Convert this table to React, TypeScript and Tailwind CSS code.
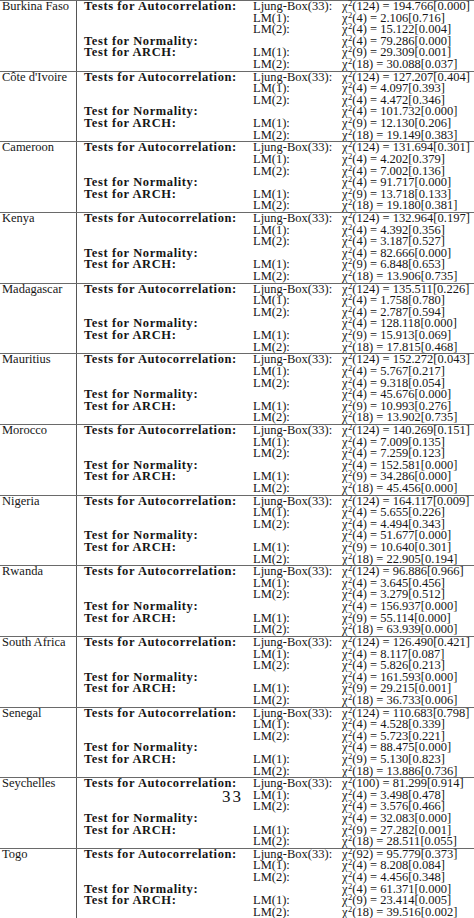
import React from "react";

type Stat = { df: string; v: string; p: string };

interface CountryRow {
  name: string;
  lb: Stat;
  lm1: Stat;
  lm2: Stat;
  norm: Stat;
  arch1: Stat;
  arch2: Stat;
}

const s = (df: string, v: string, p: string): Stat => ({ df, v, p });

const rows: CountryRow[] = [
  { name: "Burkina Faso", lb: s("124", "194.766", "0.000"), lm1: s("4", "2.106", "0.716"), lm2: s("4", "15.122", "0.004"), norm: s("4", "79.286", "0.000"), arch1: s("9", "29.309", "0.001"), arch2: s("18", "30.088", "0.037") },
  { name: "Côte d'Ivoire", lb: s("124", "127.207", "0.404"), lm1: s("4", "4.097", "0.393"), lm2: s("4", "4.472", "0.346"), norm: s("4", "101.732", "0.000"), arch1: s("9", "12.130", "0.206"), arch2: s("18", "19.149", "0.383") },
  { name: "Cameroon", lb: s("124", "131.694", "0.301"), lm1: s("4", "4.202", "0.379"), lm2: s("4", "7.002", "0.136"), norm: s("4", "91.717", "0.000"), arch1: s("9", "13.718", "0.133"), arch2: s("18", "19.180", "0.381") },
  { name: "Kenya", lb: s("124", "132.964", "0.197"), lm1: s("4", "4.392", "0.356"), lm2: s("4", "3.187", "0.527"), norm: s("4", "82.666", "0.000"), arch1: s("9", "6.848", "0.653"), arch2: s("18", "13.906", "0.735") },
  { name: "Madagascar", lb: s("124", "135.511", "0.226"), lm1: s("4", "1.758", "0.780"), lm2: s("4", "2.787", "0.594"), norm: s("4", "128.118", "0.000"), arch1: s("9", "15.913", "0.069"), arch2: s("18", "17.815", "0.468") },
  { name: "Mauritius", lb: s("124", "152.272", "0.043"), lm1: s("4", "5.767", "0.217"), lm2: s("4", "9.318", "0.054"), norm: s("4", "45.676", "0.000"), arch1: s("9", "10.993", "0.276"), arch2: s("18", "13.902", "0.735") },
  { name: "Morocco", lb: s("124", "140.269", "0.151"), lm1: s("4", "7.009", "0.135"), lm2: s("4", "7.259", "0.123"), norm: s("4", "152.581", "0.000"), arch1: s("9", "34.286", "0.000"), arch2: s("18", "45.456", "0.000") },
  { name: "Nigeria", lb: s("124", "164.117", "0.009"), lm1: s("4", "5.655", "0.226"), lm2: s("4", "4.494", "0.343"), norm: s("4", "51.677", "0.000"), arch1: s("9", "10.640", "0.301"), arch2: s("18", "22.905", "0.194") },
  { name: "Rwanda", lb: s("124", "96.886", "0.966"), lm1: s("4", "3.645", "0.456"), lm2: s("4", "3.279", "0.512"), norm: s("4", "156.937", "0.000"), arch1: s("9", "55.114", "0.000"), arch2: s("18", "63.939", "0.000") },
  { name: "South Africa", lb: s("124", "126.490", "0.421"), lm1: s("4", "8.117", "0.087"), lm2: s("4", "5.826", "0.213"), norm: s("4", "161.593", "0.000"), arch1: s("9", "29.215", "0.001"), arch2: s("18", "36.733", "0.006") },
  { name: "Senegal", lb: s("124", "110.683", "0.798"), lm1: s("4", "4.528", "0.339"), lm2: s("4", "5.723", "0.221"), norm: s("4", "88.475", "0.000"), arch1: s("9", "5.130", "0.823"), arch2: s("18", "13.886", "0.736") },
  { name: "Seychelles", lb: s("100", "81.299", "0.914"), lm1: s("4", "3.498", "0.478"), lm2: s("4", "3.576", "0.466"), norm: s("4", "32.083", "0.000"), arch1: s("9", "27.282", "0.001"), arch2: s("18", "28.511", "0.055") },
  { name: "Togo", lb: s("92", "95.779", "0.373"), lm1: s("4", "8.208", "0.084"), lm2: s("4", "4.456", "0.348"), norm: s("4", "61.371", "0.000"), arch1: s("9", "23.414", "0.005"), arch2: s("18", "39.516", "0.002") },
];

// chi-square with its df, value and p-value in brackets
const Chi = ({ st }: { st: Stat }) => (
  <span>
    χ<span className="relative -top-[4px] text-[8.5px] ml-[0.5px]">2</span>({st.df}) = {st.v}[{st.p}]
  </span>
);

const Line = ({ test, label, st }: { test?: string; label?: string; st: Stat }) => (
  <div className="flex h-[11.62px] leading-[11.62px] whitespace-nowrap">
    <div className="w-[176px] pl-[7px] font-bold tracking-[0.6px]">{test}</div>
    <div className="w-[89px]">{label}</div>
    <div className="flex-1">
      <Chi st={st} />
    </div>
  </div>
);

export default function App() {
  return (
    <div className="relative w-[474px] h-[918px] overflow-hidden bg-white text-[#161616] text-[12.5px] font-['Liberation_Serif',serif]">
      <div className="flex flex-col w-[560px]">
        {rows.map((r) => (
          <div key={r.name} className="flex border-t border-[#6a6a6a]">
            <div className="w-[77px] shrink-0 border-r border-[#555] pl-[2px] leading-[11.62px] whitespace-nowrap">
              {r.name}
            </div>
            <div className="flex flex-col">
              <Line test="Tests for Autocorrelation:" label="Ljung-Box(33):" st={r.lb} />
              <Line label="LM(1):" st={r.lm1} />
              <Line label="LM(2):" st={r.lm2} />
              <Line test="Test for Normality:" st={r.norm} />
              <Line test="Test for ARCH:" label="LM(1):" st={r.arch1} />
              <Line label="LM(2):" st={r.arch2} />
            </div>
          </div>
        ))}
      </div>
      <div className="absolute left-[222px] top-[788px] text-[17px] leading-none tracking-[2px]">33</div>
    </div>
  );
}
